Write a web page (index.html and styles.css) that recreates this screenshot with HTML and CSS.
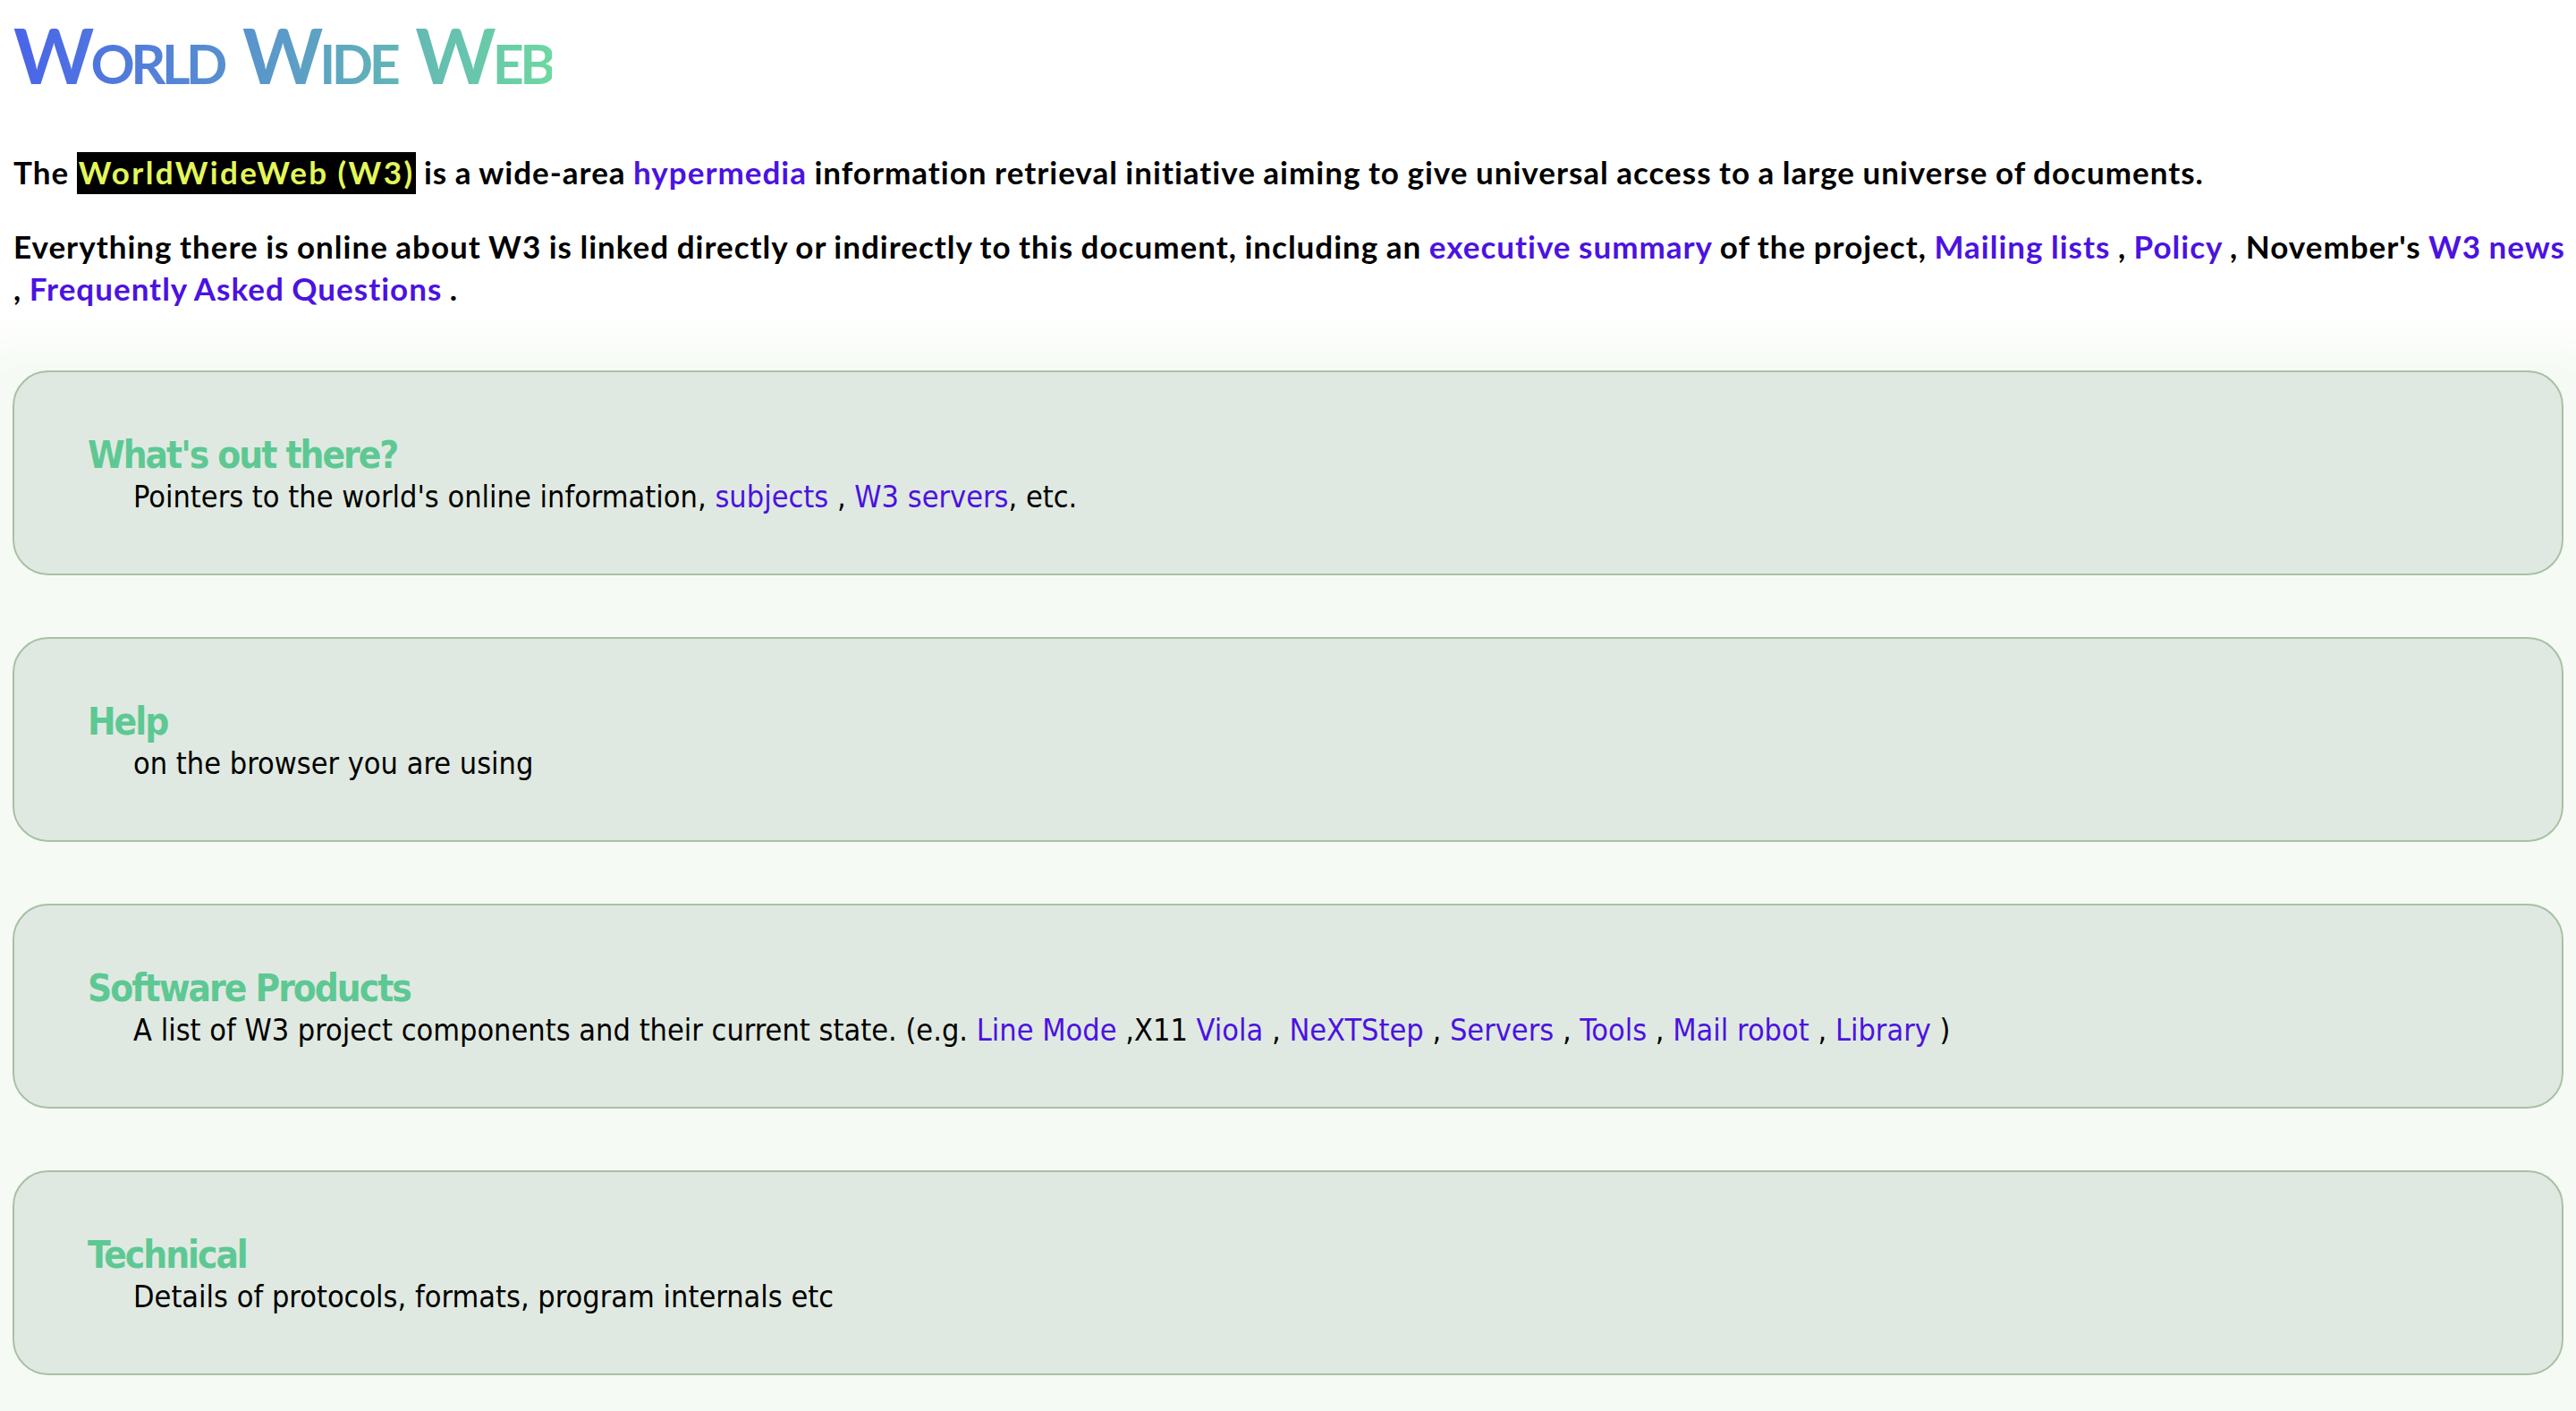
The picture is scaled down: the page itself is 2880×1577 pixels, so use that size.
FILE: index.html
```html
<!DOCTYPE html>
<html lang="en">
<head>
<meta charset="utf-8">
<title>World Wide Web</title>
<link rel="stylesheet" href="styles.css">
</head>
<body>
<header class="intro">
  <h1 class="title"><span class="title-text"><span class="cap">W</span><span class="sc">orld</span> <span class="cap">W</span><span class="sc">ide</span> <span class="cap">W</span><span class="sc">eb</span></span></h1>
  <p class="lead">The <span class="mark">WorldWideWeb (W3)</span> is a wide-area <a href="#">hypermedia</a> information retrieval initiative aiming to give universal access to a large universe of documents.</p>
  <p class="lead">Everything there is online about W3 is linked directly or indirectly to this document, including an <a href="#">executive summary</a> of the project, <a href="#">Mailing lists</a> , <a href="#">Policy</a> , November's <a href="#">W3 news</a> , <a href="#">Frequently Asked Questions</a> .</p>
</header>
<main class="cards">
  <section class="card">
    <h2 class="card-title">What's out there?</h2>
    <p class="card-text">Pointers to the world's online information, <a href="#">subjects</a> , <a href="#">W3 servers</a>, etc.</p>
  </section>
  <section class="card">
    <h2 class="card-title">Help</h2>
    <p class="card-text">on the browser you are using</p>
  </section>
  <section class="card">
    <h2 class="card-title">Software Products</h2>
    <p class="card-text">A list of W3 project components and their current state. (e.g. <a href="#">Line Mode</a> ,X11 <a href="#">Viola</a> , <a href="#">NeXTStep</a> , <a href="#">Servers</a> , <a href="#">Tools</a> , <a href="#">Mail robot</a> , <a href="#">Library</a> )</p>
  </section>
  <section class="card">
    <h2 class="card-title">Technical</h2>
    <p class="card-text">Details of protocols, formats, program internals etc</p>
  </section>
</main>
</body>
</html>
```
FILE: styles.css
```css
html, body {
  margin: 0;
  padding: 0;
  background: #ffffff;
}

body {
  min-height: 1577px;
  color: #000;
  overflow: hidden;
}

a {
  color: #4b12e2;
  text-decoration: none;
}

.intro {
  padding: 9px 6px 0 15px;
  font-family: "Lato", "Open Sans", sans-serif;
}

.title {
  margin: 0;
  font-size: 86px;
  line-height: 103px;
  font-weight: 700;
}

.title-text {
  background: linear-gradient(90deg, #4a64e9 0%, #5b9bc8 50%, #6dd8a0 100%);
  -webkit-background-clip: text;
  background-clip: text;
  color: transparent;
  word-spacing: 0;
}

.cap {
  font-size: 86px;
  line-height: 1;
  letter-spacing: -4px;
}

.sc {
  font-size: 61px;
  line-height: 1;
  text-transform: uppercase;
  letter-spacing: -4.5px;
}

.lead {
  margin: 0;
  font-size: 35px;
  line-height: 47px;
  font-weight: 700;
  letter-spacing: 1px;
  word-spacing: -1px;
}

.lead:first-of-type {
  margin-top: 57px;
}

.lead + .lead {
  margin-top: 36px;
}

.mark {
  background: #000;
  color: #e3f75a;
  padding: 1px 2px 4px;
  letter-spacing: 2.4px;
}

.cards {
  margin-top: 68px;
  padding: 0 14px 40px;
  display: flex;
  flex-direction: column;
  gap: 69px;
  background: #f5fbf4;
  box-shadow: 0 0 50px 30px #f5fbf4;
  font-family: "DejaVu Sans Condensed", "DejaVu Sans", sans-serif;
}

.card {
  height: 229px;
  box-sizing: border-box;
  border: 2px solid #a8c1a4;
  border-radius: 40px;
  background: #e0e9e1;
  padding: 68px 40px 0 82px;
}

.card-title {
  margin: 0;
  font-size: 42px;
  line-height: 50px;
  font-weight: 700;
  letter-spacing: -2px;
  color: #5dc893;
}

.card-text {
  margin: 0 0 0 51px;
  font-size: 34px;
  line-height: 42px;
}
```
